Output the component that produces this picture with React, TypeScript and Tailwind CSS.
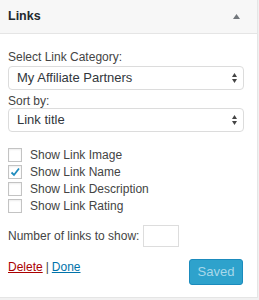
const font = { fontFamily: '"Liberation Sans", Arial, sans-serif' };

function Arrows() {
  return (
    <svg width="5" height="10" viewBox="0 0 5 10">
      <path d="M2.5 0 L5 4 H0 Z" fill="#444" />
      <path d="M2.5 10 L5 6 H0 Z" fill="#444" />
    </svg>
  );
}

function Select({ value }: { value: string }) {
  return (
    <div className="flex h-[24px] w-[236px] items-center justify-between rounded-[4px] border border-[#dcdcdc] bg-white pl-[8px] pr-[6px] text-[13px] leading-[16px] text-[#32373c]">
      <span>{value}</span>
      <Arrows />
    </div>
  );
}

function Check({ label, checked }: { label: string; checked?: boolean }) {
  return (
    <label className="flex h-[17px] items-center gap-[8px] text-[12px] leading-[14px] text-[#444]">
      <span className="flex h-[14px] w-[14px] items-center justify-center border border-[#c3c3c3] bg-white shadow-[inset_0_1px_2px_rgba(0,0,0,0.07)]">
        {checked && (
          <svg width="12" height="12" viewBox="0 0 12 12">
            <path d="M2.5 6.5 L5 9 L10 2.5" fill="none" stroke="#1e8cbe" strokeWidth="1.8" />
          </svg>
        )}
      </span>
      {label}
    </label>
  );
}

export default function App() {
  return (
    <div className="h-[300px] w-[259px] bg-[#f1f1f1]" style={font}>
      <div className="w-[258px] border-r border-b border-[#e5e5e5] bg-white">
        {/* Cabecera */}
        <div className="flex h-[34px] items-center justify-between border-b border-[#e5e5e5] bg-[#f7f7f7] pl-[8px] pr-[17px]">
          <h3 className="text-[12.5px] font-bold text-[#23282d]">Links</h3>
          <svg width="7" height="5" viewBox="0 0 7 5">
            <path d="M3.5 0 L7 5 H0 Z" fill="#72777c" />
          </svg>
        </div>

        {/* Contenido */}
        <div className="px-[8px] pt-[16px] pb-[12px]">
          <p className="mb-[2px] text-[12px] leading-[14px] text-[#444]">Select Link Category:</p>
          <Select value="My Affiliate Partners" />
          <p className="mt-[4px] text-[12px] leading-[14px] text-[#444]">Sort by:</p>
          <Select value="Link title" />

          <div className="mt-[14px] flex flex-col">
            <Check label="Show Link Image" />
            <Check label="Show Link Name" checked />
            <Check label="Show Link Description" />
            <Check label="Show Link Rating" />
          </div>

          <div className="mt-[11px] flex items-center gap-[4px] text-[12px] leading-[14px] text-[#444]">
            <span>Number of links to show:</span>
            <span className="h-[22px] w-[36px] border border-[#ddd] bg-white" />
          </div>

          <div className="mt-[12px] flex items-start justify-between pr-[6px]">
            <div className="pt-[1px] text-[12px] leading-[14px] text-[#444]">
              <a className="text-[#a00] underline">Delete</a>
              <span className="mx-[3px]">|</span>
              <a className="text-[#0073aa] underline">Done</a>
            </div>
            <button className="h-[26px] w-[54px] rounded-[3px] border border-[#1b8bbd] bg-[#2ea2cc] text-[13px] text-[#a8d8ea]">
              Saved
            </button>
          </div>
        </div>
      </div>
    </div>
  );
}
